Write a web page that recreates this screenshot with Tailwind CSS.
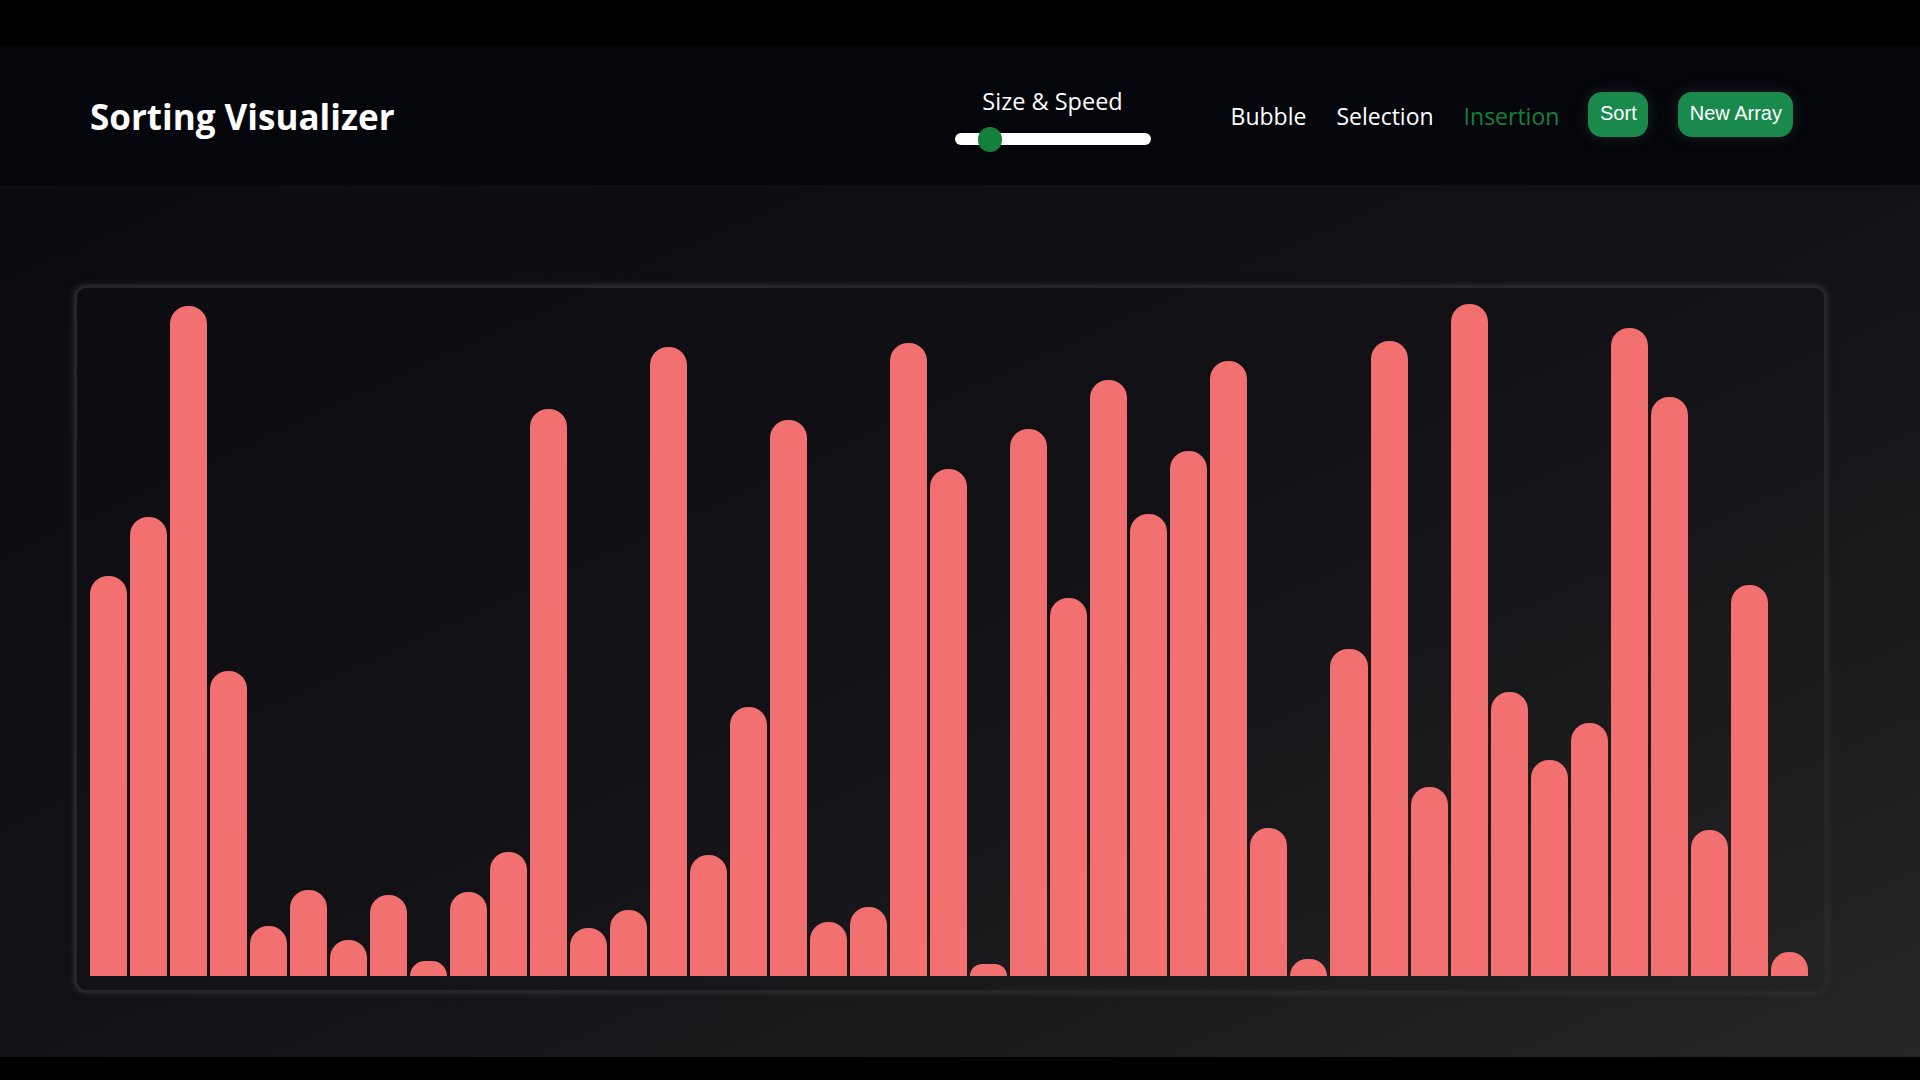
<!DOCTYPE html>
<html>

<head>
    <title>Sorting Visualizer</title>
    <script src="https://cdn.jsdelivr.net/npm/@tailwindcss/browser@4"></script>
    <meta name="viewport" content="width=device-width, initial-scale=1.0">
</head>

<body class="h-screen overflow-hidden bg-black pt-[47px] pb-[23px] font-['Open_Sans',sans-serif] text-white">
    <div class="flex flex-col h-full">
        <!-- Navbar -->
        <nav class="flex items-center h-[138px] pl-[90px] bg-[#05050c]">
            <h1 class="font-bold text-[35px] leading-none">Sorting Visualizer</h1>
            <div class="flex flex-col items-center w-[196px] ml-[560px] mt-[2px]">
                <label class="text-[23.5px] leading-[30px] -mt-[4px]">Size &amp; Speed</label>
                <div class="relative w-full h-[12px] mt-[17px] rounded-full bg-white">
                    <div class="absolute left-[23px] -top-[6px] w-[24px] h-[25px] rounded-full bg-[#15803d]"></div>
                </div>
            </div>
            <div class="flex items-center gap-[30px] ml-[80px] text-[23px]">
                <button>Bubble</button>
                <button>Selection</button>
                <button class="text-[#15803d]">Insertion</button>
            </div>
            <div class="flex items-center gap-[30px] ml-[29px] -mt-[3px] font-['Liberation_Sans',sans-serif] text-[20px]">
                <button class="w-[60px] h-[45px] pb-[3px] rounded-[14px] bg-[#1a8a4c] shadow-[0_0_14px_rgba(120,120,120,0.25)]">Sort</button>
                <button class="w-[115px] h-[45px] pb-[3px] rounded-[14px] bg-[#1a8a4c] shadow-[0_0_14px_rgba(120,120,120,0.25)]">New Array</button>
            </div>
        </nav>
        <!-- Chart area -->
        <main class="flex-1 pt-[100px] pb-[64px] pl-[74px] pr-[93px] bg-linear-to-br from-[#0b0b12] via-[#111116] to-[#262626]">
            <div class="flex items-end gap-[3px] h-full pl-[13px] pr-[16px] pb-[14px] rounded-[12px] border-[3px] border-[#262628] shadow-[0_0_6px_rgba(70,70,70,0.6)]">
                <div class="flex-1 rounded-t-[18px] bg-[#f27070]" style="height:400px"></div>
                <div class="flex-1 rounded-t-[18px] bg-[#f27070]" style="height:459px"></div>
                <div class="flex-1 rounded-t-[18px] bg-[#f27070]" style="height:670px"></div>
                <div class="flex-1 rounded-t-[18px] bg-[#f27070]" style="height:305px"></div>
                <div class="flex-1 rounded-t-[18px] bg-[#f27070]" style="height:50px"></div>
                <div class="flex-1 rounded-t-[18px] bg-[#f27070]" style="height:86px"></div>
                <div class="flex-1 rounded-t-[18px] bg-[#f27070]" style="height:36px"></div>
                <div class="flex-1 rounded-t-[18px] bg-[#f27070]" style="height:81px"></div>
                <div class="flex-1 rounded-t-[18px] bg-[#f27070]" style="height:15px"></div>
                <div class="flex-1 rounded-t-[18px] bg-[#f27070]" style="height:84px"></div>
                <div class="flex-1 rounded-t-[18px] bg-[#f27070]" style="height:124px"></div>
                <div class="flex-1 rounded-t-[18px] bg-[#f27070]" style="height:567px"></div>
                <div class="flex-1 rounded-t-[18px] bg-[#f27070]" style="height:48px"></div>
                <div class="flex-1 rounded-t-[18px] bg-[#f27070]" style="height:66px"></div>
                <div class="flex-1 rounded-t-[18px] bg-[#f27070]" style="height:629px"></div>
                <div class="flex-1 rounded-t-[18px] bg-[#f27070]" style="height:121px"></div>
                <div class="flex-1 rounded-t-[18px] bg-[#f27070]" style="height:269px"></div>
                <div class="flex-1 rounded-t-[18px] bg-[#f27070]" style="height:556px"></div>
                <div class="flex-1 rounded-t-[18px] bg-[#f27070]" style="height:54px"></div>
                <div class="flex-1 rounded-t-[18px] bg-[#f27070]" style="height:69px"></div>
                <div class="flex-1 rounded-t-[18px] bg-[#f27070]" style="height:633px"></div>
                <div class="flex-1 rounded-t-[18px] bg-[#f27070]" style="height:507px"></div>
                <div class="flex-1 rounded-t-[18px] bg-[#f27070]" style="height:12px"></div>
                <div class="flex-1 rounded-t-[18px] bg-[#f27070]" style="height:547px"></div>
                <div class="flex-1 rounded-t-[18px] bg-[#f27070]" style="height:378px"></div>
                <div class="flex-1 rounded-t-[18px] bg-[#f27070]" style="height:596px"></div>
                <div class="flex-1 rounded-t-[18px] bg-[#f27070]" style="height:462px"></div>
                <div class="flex-1 rounded-t-[18px] bg-[#f27070]" style="height:525px"></div>
                <div class="flex-1 rounded-t-[18px] bg-[#f27070]" style="height:615px"></div>
                <div class="flex-1 rounded-t-[18px] bg-[#f27070]" style="height:148px"></div>
                <div class="flex-1 rounded-t-[18px] bg-[#f27070]" style="height:17px"></div>
                <div class="flex-1 rounded-t-[18px] bg-[#f27070]" style="height:327px"></div>
                <div class="flex-1 rounded-t-[18px] bg-[#f27070]" style="height:635px"></div>
                <div class="flex-1 rounded-t-[18px] bg-[#f27070]" style="height:189px"></div>
                <div class="flex-1 rounded-t-[18px] bg-[#f27070]" style="height:672px"></div>
                <div class="flex-1 rounded-t-[18px] bg-[#f27070]" style="height:284px"></div>
                <div class="flex-1 rounded-t-[18px] bg-[#f27070]" style="height:216px"></div>
                <div class="flex-1 rounded-t-[18px] bg-[#f27070]" style="height:253px"></div>
                <div class="flex-1 rounded-t-[18px] bg-[#f27070]" style="height:648px"></div>
                <div class="flex-1 rounded-t-[18px] bg-[#f27070]" style="height:579px"></div>
                <div class="flex-1 rounded-t-[18px] bg-[#f27070]" style="height:146px"></div>
                <div class="flex-1 rounded-t-[18px] bg-[#f27070]" style="height:391px"></div>
                <div class="flex-1 rounded-t-[18px] bg-[#f27070]" style="height:24px"></div>
            </div>
        </main>
    </div>
</body>

</html>
